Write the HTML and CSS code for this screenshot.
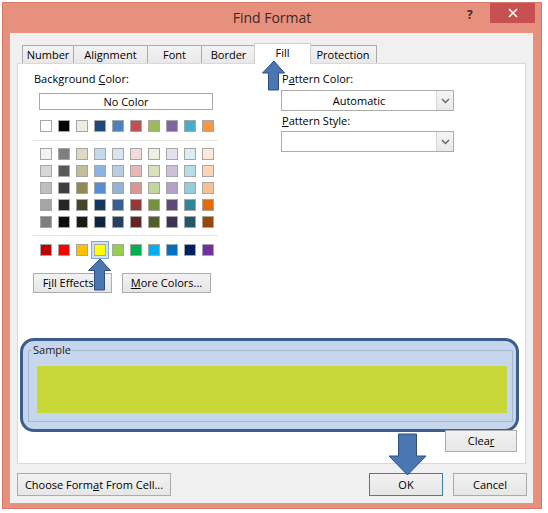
FILE: index.html
```html
<!DOCTYPE html>
<html>
<head>
<meta charset="utf-8">
<link rel="stylesheet" href="styles.css">
</head>
<body>
<div class="window">
  <div class="titlebar">
    <span class="title">Find Format</span>
    <span class="help">?</span>
    <span class="close">
      <svg width="10" height="10" viewBox="0 0 10 10"><path d="M1 1L9 9M9 1L1 9" stroke="#fff" stroke-width="1.6"/></svg>
    </span>
  </div>
  <div class="client">
    <div class="tabs">
      <div class="tab w-number">Number</div>
      <div class="tab w-align">Alignment</div>
      <div class="tab w-font">Font</div>
      <div class="tab w-border">Border</div>
      <div class="tab w-fill selected">Fill</div>
      <div class="tab w-prot">Protection</div>
    </div>
    <div class="panel">
      <div class="fill-top">
        <div class="left-col">
          <div class="label">Background <u>C</u>olor:</div>
          <div class="nocolor">No Color</div>
          <div class="swatches row-base">
            <i style="background:#ffffff"></i><i style="background:#000000"></i><i style="background:#eeece1"></i><i style="background:#1f497d"></i><i style="background:#4f81bd"></i><i style="background:#c0504d"></i><i style="background:#9bbb59"></i><i style="background:#8064a2"></i><i style="background:#4bacc6"></i><i style="background:#f79646"></i>
          </div>
          <div class="sep"></div>
          <div class="swatches theme">
            <i style="background:#f2f2f2"></i><i style="background:#7f7f7f"></i><i style="background:#ddd9c3"></i><i style="background:#c6d9f0"></i><i style="background:#dbe5f1"></i><i style="background:#f2dcdb"></i><i style="background:#ebf1dd"></i><i style="background:#e5e0ec"></i><i style="background:#dbeef3"></i><i style="background:#fdeada"></i>
            <i style="background:#d8d8d8"></i><i style="background:#595959"></i><i style="background:#c4bd97"></i><i style="background:#8db3e2"></i><i style="background:#b8cce4"></i><i style="background:#e5b9b7"></i><i style="background:#d7e3bc"></i><i style="background:#ccc1d9"></i><i style="background:#b7dde8"></i><i style="background:#fbd5b5"></i>
            <i style="background:#bfbfbf"></i><i style="background:#3f3f3f"></i><i style="background:#938953"></i><i style="background:#548dd4"></i><i style="background:#95b3d7"></i><i style="background:#d99694"></i><i style="background:#c3d69b"></i><i style="background:#b2a2c7"></i><i style="background:#92cddc"></i><i style="background:#fac08f"></i>
            <i style="background:#a5a5a5"></i><i style="background:#262626"></i><i style="background:#494429"></i><i style="background:#17365d"></i><i style="background:#366092"></i><i style="background:#953734"></i><i style="background:#76923c"></i><i style="background:#5f497a"></i><i style="background:#31859b"></i><i style="background:#e36c09"></i>
            <i style="background:#7f7f7f"></i><i style="background:#0c0c0c"></i><i style="background:#1d1b10"></i><i style="background:#0f243e"></i><i style="background:#244061"></i><i style="background:#632423"></i><i style="background:#4f6128"></i><i style="background:#3f3151"></i><i style="background:#205867"></i><i style="background:#974806"></i>
          </div>
          <div class="sep sep2"></div>
          <div class="swatches row-std">
            <i style="background:#c00000"></i><i style="background:#ff0000"></i><i style="background:#ffc000"></i><i class="picked" style="background:#ffff00"></i><i style="background:#92d050"></i><i style="background:#00b050"></i><i style="background:#00b0f0"></i><i style="background:#0070c0"></i><i style="background:#002060"></i><i style="background:#7030a0"></i>
          </div>
          <div class="btn-row">
            <div class="btn btn-effects">F<u>i</u>ll Effects...</div>
            <div class="btn btn-more"><u>M</u>ore Colors...</div>
          </div>
        </div>
        <div class="right-col">
          <div class="label">P<u>a</u>ttern Color:</div>
          <div class="combo">
            <span class="combo-text">Automatic</span>
            <span class="combo-arrow"><svg width="9" height="6" viewBox="0 0 9 6"><path d="M1 1L4.5 4.5L8 1" fill="none" stroke="#606060" stroke-width="1.3"/></svg></span>
          </div>
          <div class="label label2"><u>P</u>attern Style:</div>
          <div class="combo combo2">
            <span class="combo-text"></span>
            <span class="combo-arrow"><svg width="9" height="6" viewBox="0 0 9 6"><path d="M1 1L4.5 4.5L8 1" fill="none" stroke="#606060" stroke-width="1.3"/></svg></span>
          </div>
        </div>
      </div>
      <div class="sample-hl">
        <fieldset class="sample">
          <legend>Sample</legend>
          <div class="sample-fill"></div>
        </fieldset>
      </div>
      <div class="clear-row"><div class="btn btn-clear">Clea<u>r</u></div></div>
    </div>
    <div class="footer">
      <div class="btn btn-choose">Choose Form<u>a</u>t From Cell...</div>
      <div class="spacer"></div>
      <div class="btn btn-ok">OK</div>
      <div class="btn btn-cancel">Cancel</div>
    </div>
  </div>

  <svg class="arrow arrow-fill" width="24" height="32" viewBox="0 0 24 32">
    <path d="M12 1L22.5 13H16.5V30H6.5V13H0.5Z" fill="#4a76b2" stroke="#2d4f80" stroke-width="1"/>
  </svg>
  <svg class="arrow arrow-yellow" width="24" height="34" viewBox="0 0 24 34">
    <path d="M12 1L22.5 12.5H16.5V32H6.5V12.5H0.5Z" fill="#4a76b2" stroke="#2d4f80" stroke-width="1"/>
  </svg>
  <svg class="arrow arrow-ok" width="40" height="44" viewBox="0 0 40 44">
    <path d="M10.5 1H28.5V23H38L19.5 42L1 23H10.5Z" fill="#4a76b2" stroke="#2d4f80" stroke-width="1"/>
  </svg>
</div>
</body>
</html>
```

FILE: styles.css
```css
* { box-sizing: border-box; }
html, body { margin: 0; padding: 0; background: #ffffff; }
body {
  font-family: "Open Sans", "Noto Sans", "Liberation Sans", sans-serif;
  font-size: 11px;
  color: #000;
}
u { text-decoration: underline; text-underline-offset: 1px; }

.window {
  position: relative;
  margin: 2px 0 0 2px;
  width: 540px;
  height: 507px;
  background: #e8907e;
  border: 1px solid #d47a67;
}
.titlebar {
  position: relative;
  height: 30px;
}
.title {
  display: block;
  text-align: center;
  font-size: 14px;
  line-height: 30px;
  color: #3b2a26;
  padding-top: 0;
}
.help {
  position: absolute;
  left: 464px;
  top: 3px;
  font-size: 12px;
  font-weight: bold;
  color: #3b2a26;
}
.close {
  position: absolute;
  left: 487px;
  top: 0;
  width: 45px;
  height: 20px;
  background: #c75050;
  display: flex;
  align-items: center;
  justify-content: center;
}

.client {
  margin-left: 7px;
  width: 523px;
  height: 470px;
  background: #f0f0f0;
}

.tabs {
  height: 30px;
  padding-left: 12px;
  display: flex;
  align-items: flex-end;
}
.tab {
  height: 18px;
  border: 1px solid #acacac;
  border-bottom: none;
  margin-left: -1px;
  background: linear-gradient(#f3f3f3, #e8e8e8);
  text-align: center;
  line-height: 17px;
  position: relative;
}
.tab:first-child { margin-left: 0; }
.w-number { width: 52px; }
.w-align { width: 75px; }
.w-font { width: 55px; }
.w-border { width: 55px; }
.w-fill { width: 57px; }
.w-prot { width: 68px; }
.tab.selected {
  height: 21px;
  margin-bottom: -1px;
  margin-left: -2px;
  margin-right: -1px;
  background: #fff;
  border-color: #d0d0d0;
  z-index: 2;
  line-height: 17px;
}

.panel {
  margin-left: 7px;
  width: 509px;
  height: 401px;
  background: #fff;
  border: 1px solid #d9d9d9;
  padding-top: 7px;
  display: flex;
  flex-direction: column;
  position: relative;
}
.fill-top { display: flex; }
.left-col { margin-left: 15px; width: 186px; }
.right-col { margin-left: 62px; }
.label { height: 16px; line-height: 16px; margin-left: 1px; }
.nocolor {
  margin-top: 6px;
  margin-left: 6px;
  width: 174px;
  height: 17px;
  border: 1px solid #a8a8a8;
  text-align: center;
  line-height: 15px;
}
.swatches {
  margin-left: 7px;
  display: grid;
  grid-template-columns: repeat(10, 12px);
  column-gap: 6px;
  row-gap: 5px;
}
.swatches i {
  display: block;
  width: 12px;
  height: 12px;
  border: 1px solid #a6a6a6;
  position: relative;
}
.row-base { margin-top: 10px; }
.sep {
  margin-top: 8px;
  height: 1px;
  width: 185px;
  background: #e6e6e6;
}
.theme { margin-top: 7px; }
.sep2 { margin-top: 7px; }
.row-std { margin-top: 8px; }
.swatches i.picked {
  outline: 1px solid #7aa7dc;
  outline-offset: 2px;
  box-shadow: 0 0 0 3px #cde1f7;
}

.btn {
  height: 20px;
  border: 1px solid #acacac;
  background: linear-gradient(#f2f2f2, #e6e6e6);
  text-align: center;
  line-height: 18px;
}
.btn-row { margin-top: 17px; display: flex; gap: 10px; }
.btn-effects { width: 79px; }
.btn-more { width: 89px; }

.label2 { margin-top: 2px; }
.combo {
  margin-top: 3px;
  width: 173px;
  height: 21px;
  border: 1px solid #acacac;
  background: #fff;
  display: flex;
}
.combo2 { margin-top: 2px; }
.combo-text { flex: 1; text-align: center; line-height: 19px; }
.combo-arrow {
  width: 17px;
  border-left: 1px solid #d6d6d6;
  background: linear-gradient(#f4f4f4, #e9e9e9);
  display: flex;
  align-items: center;
  justify-content: center;
}

.sample-hl {
  margin-top: 45px;
  margin-left: 2px;
  width: 499px;
  height: 94px;
  border: 3px solid #3b5e8c;
  border-radius: 14px;
  background: #c6d6ec;
  padding: 2px 0 0 5px;
}
.sample {
  margin: 0;
  padding: 0;
  width: 485px;
  height: 79px;
  border: 1px solid #a7b8cf;
}
.sample legend {
  margin-left: 3px;
  padding: 0 1px;
  line-height: 14px;
  font-size: 11px;
  color: #222;
}
.sample-fill {
  margin: 9px 0 0 8px;
  width: 470px;
  height: 47px;
  background: #c9d839;
}

.clear-row {
  display: flex;
  justify-content: flex-end;
  padding-right: 8px;
  margin-top: -2px;
}
.btn-clear { width: 72px; height: 22px; line-height: 20px; }

.footer {
  margin-top: 9px;
  display: flex;
  padding-left: 7px;
}
.footer .btn { height: 23px; line-height: 21px; }
.btn-choose { width: 154px; }
.spacer { width: 198px; }
.btn-ok { width: 74px; border-color: #3c7fb1; }
.btn-cancel { width: 74px; margin-left: 10px; }

.arrow { position: absolute; z-index: 5; }
.arrow-fill { left: 259px; top: 57px; }
.arrow-yellow { left: 85px; top: 255px; }
.arrow-ok { left: 385px; top: 430px; }
```
